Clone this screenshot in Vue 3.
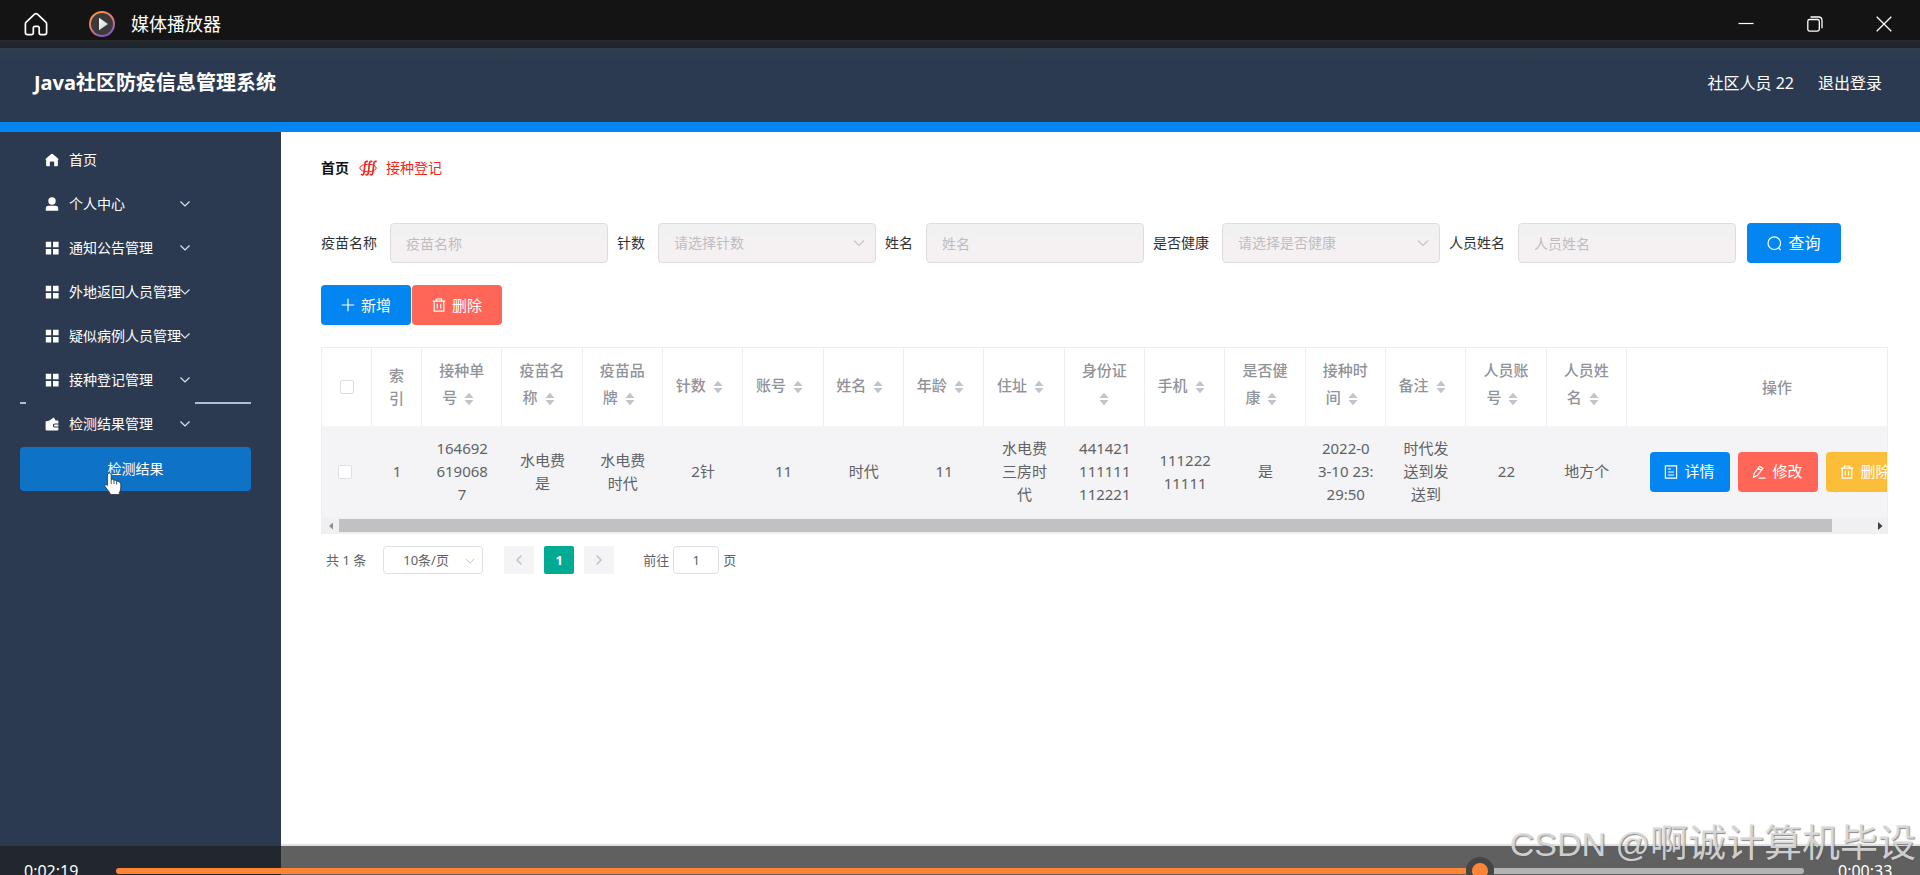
<script setup>
import { ref } from 'vue'

const menu = [
  { label: '首页', icon: 'home', arrow: false },
  { label: '个人中心', icon: 'user', arrow: true },
  { label: '通知公告管理', icon: 'grid', arrow: true },
  { label: '外地返回人员管理', icon: 'grid', arrow: true },
  { label: '疑似病例人员管理', icon: 'grid', arrow: true },
  { label: '接种登记管理', icon: 'grid', arrow: true },
  { label: '检测结果管理', icon: 'wallet', arrow: true, marked: true }
]

const filters = [
  { id: 'vaccine', label: '疫苗名称', placeholder: '疫苗名称', type: 'text' },
  { id: 'dose', label: '针数', placeholder: '请选择针数', type: 'select' },
  { id: 'name', label: '姓名', placeholder: '姓名', type: 'text' },
  { id: 'healthy', label: '是否健康', placeholder: '请选择是否健康', type: 'select' },
  { id: 'person', label: '人员姓名', placeholder: '人员姓名', type: 'text' }
]

const columns = [
  { title: ['接种单', '号'], cell: ['164692', '619068', '7'] },
  { title: ['疫苗名', '称'], cell: ['水电费', '是'] },
  { title: ['疫苗品', '牌'], cell: ['水电费', '时代'] },
  { title: ['针数'], cell: ['2针'] },
  { title: ['账号'], cell: ['11'] },
  { title: ['姓名'], cell: ['时代'] },
  { title: ['年龄'], cell: ['11'] },
  { title: ['住址'], cell: ['水电费', '三房时', '代'] },
  { title: ['身份证', ''], cell: ['441421', '111111', '112221'] },
  { title: ['手机'], cell: ['111222', '11111'] },
  { title: ['是否健', '康'], cell: ['是'] },
  { title: ['接种时', '间'], cell: ['2022-0', '3-10 23:', '29:50'] },
  { title: ['备注'], cell: ['时代发', '送到发', '送到'] },
  { title: ['人员账', '号'], cell: ['22'] },
  { title: ['人员姓', '名'], cell: ['地方个'] }
]

const jump = ref('1')
</script>

<template>
  <div class="window">
    <header class="titlebar">
      <button class="bare home" type="button" aria-label="主页">
        <svg width="24" height="24" viewBox="0 0 24 24" fill="none" stroke="#fff" stroke-width="1.7" stroke-linejoin="round">
          <path d="M2.2 10.2 L10.6 2.2 Q12 1 13.4 2.2 L21.8 10.2 Q22.6 11 22.6 12 V20.5 Q22.6 22.6 20.6 22.6 H17 Q15.2 22.6 15.2 20.8 V16 Q15.2 14.3 13.6 14.3 H10.9 Q9.3 14.3 9.3 16 V20.8 Q9.3 22.6 7.5 22.6 H3.5 Q1.4 22.6 1.4 20.5 V12 Q1.4 11 2.2 10.2 Z" />
        </svg>
      </button>
      <svg class="logo" width="26" height="26" viewBox="0 0 26 26">
        <defs>
          <linearGradient id="ring" x1="0.2" y1="0" x2="0.7" y2="1">
            <stop offset="0" stop-color="#ff9440" />
            <stop offset="0.5" stop-color="#d87a7c" />
            <stop offset="1" stop-color="#8a52c8" />
          </linearGradient>
          <linearGradient id="tri" x1="0" y1="0" x2="1" y2="1">
            <stop offset="0" stop-color="#fff" />
            <stop offset="1" stop-color="#c8c8c8" />
          </linearGradient>
        </defs>
        <circle cx="13" cy="13" r="12" fill="#3a3a3a" stroke="url(#ring)" stroke-width="2" />
        <path d="M10 6.8 L19 13 L10 19.2 Z" fill="url(#tri)" />
      </svg>
      <span class="app-name">媒体播放器</span>
      <div class="controls">
        <button class="bare" type="button" aria-label="最小化">
          <svg width="16" height="16" viewBox="0 0 16 16"><path d="M0.5 7.5 H15.5" stroke="#fff" stroke-width="1.2" /></svg>
        </button>
        <button class="bare" type="button" aria-label="还原">
          <svg width="16" height="16" viewBox="0 0 16 16" fill="none" stroke="#fff" stroke-width="1.3">
            <rect x="0.8" y="3.5" width="11.5" height="11.6" rx="1.8" />
            <path d="M3.5 1 H11.5 Q15 1 15 4.5 V12.3" />
          </svg>
        </button>
        <button class="bare" type="button" aria-label="关闭">
          <svg width="16" height="16" viewBox="0 0 16 16"><path d="M0.7 0.7 L15.3 15.3 M15.3 0.7 L0.7 15.3" stroke="#fff" stroke-width="1.3" /></svg>
        </button>
      </div>
    </header>

    <div class="banner">
      <h1>Java社区防疫信息管理系统</h1>
      <span class="who">社区人员 22</span>
      <a href="#" class="logout">退出登录</a>
    </div>

    <div class="body">
      <nav class="sidebar">
        <ul>
          <li v-for="m in menu" :key="m.label" :class="{ marked: m.marked }">
            <a href="#">
              <svg class="mi" width="14" height="14" viewBox="0 0 14 14" fill="#fff">
                <path v-if="m.icon === 'home'" d="M7 0.8 Q7.5 0.8 8 1.2 L13 5.6 Q13.6 6.2 13.4 7 H12.9 V12 Q12.9 13.2 11.7 13.2 H9.2 V9.6 Q9.2 8.6 8.2 8.6 H5.8 Q4.8 8.6 4.8 9.6 V13.2 H2.3 Q1.1 13.2 1.1 12 V7 H0.6 Q0.4 6.2 1 5.6 L6 1.2 Q6.5 0.8 7 0.8 Z" />
                <template v-else-if="m.icon === 'user'">
                  <circle cx="7" cy="4" r="3.7" />
                  <path d="M0.8 13.8 V11.6 Q0.8 8.8 3.6 8.8 H10.4 Q13.2 8.8 13.2 11.6 V13.8 Z" />
                </template>
                <path v-else-if="m.icon === 'grid'" d="M0.8 0.8 H6.2 V6.2 H0.8 Z M8 0.8 H13.6 V6.2 H8 Z M0.8 8 H6.2 V13.4 H0.8 Z M8 8 H13.6 V13.4 H8 Z" />
                <path v-else d="M0.6 4.4 L4.4 3.6 L8.8 0.6 L10.6 3.4 H12.4 Q13.4 3.4 13.4 4.6 V6.4 H9.8 A2 2 0 0 0 9.8 10.4 H13.4 V12.2 Q13.4 13.4 12.2 13.4 H1.8 Q0.6 13.4 0.6 12.2 Z M9.9 7.6 H13.4 V9.4 H9.9 A0.9 0.9 0 0 1 9.9 7.6 Z" />
              </svg>
              <span>{{ m.label }}</span>
            </a>
            <svg v-if="m.arrow" class="chev" width="12" height="12" viewBox="0 0 12 12" fill="none" stroke="#dfe5ec" stroke-width="1.2">
              <path d="M1.5 3.5 L6 8 L10.5 3.5" />
            </svg>
          </li>
        </ul>
        <div class="sub">
          <a href="#">检测结果</a>
          <svg class="hand" width="18" height="24" viewBox="0 0 18 24">
            <path d="M5.2 1 Q7.2 1 7.2 3 V7.4 Q9 6.6 9.8 8.2 Q11.6 7.6 12.4 9.2 Q14.2 8.6 15 10 Q16.8 9.8 16.8 12 V16 Q16.8 18.4 15.4 20.4 V22.6 H6.6 Q5.6 20.2 4 18.4 L1 14.6 Q0.4 13 1.6 12.6 Q2.4 12.4 3.4 13.6 V3 Q3.4 1 5.2 1 Z" fill="#fff" stroke="#1b2a3c" stroke-width="0.8" />
            <path d="M7.2 7.4 V12 M10 8.4 V12 M12.6 9.4 V12.4" stroke="#1b2a3c" stroke-width="0.8" fill="none" />
          </svg>
        </div>
      </nav>

      <main>
        <div class="crumbs">
          <a href="#">首页</a>
          <svg class="sep" width="18" height="16" viewBox="0 0 18 16" fill="none" stroke="#f2281e">
            <path stroke-width="1.7" stroke-linecap="round" d="M2.6 14.6 Q4.6 15.6 5 12.6 L6 3.6 Q6.4 0.8 8.2 1.4 M7 14.6 Q9 15.6 9.4 12.6 L10.4 3.6 Q10.8 0.8 12.6 1.4 M11.4 14.6 Q13.4 15.6 13.8 12.6 L14.8 3.6 Q15.2 0.8 17 1.4" />
            <ellipse cx="9" cy="8" rx="8.2" ry="3.8" stroke-width="1" />
          </svg>
          <span class="here">接种登记</span>
        </div>

        <form class="filters" @submit.prevent>
          <div v-for="f in filters" :key="f.id" class="field">
            <label :for="f.id">{{ f.label }}</label>
            <input v-if="f.type === 'text'" :id="f.id" type="text" :placeholder="f.placeholder" />
            <div v-else class="pick">
              <select :id="f.id">
                <option value="">{{ f.placeholder }}</option>
              </select>
              <svg width="12" height="12" viewBox="0 0 12 12" fill="none" stroke="#c0c4cc" stroke-width="1.1"><path d="M1 3.5 L6 8.5 L11 3.5" /></svg>
            </div>
          </div>
          <button class="btn search" type="submit">
            <svg width="15" height="15" viewBox="0 0 15 15" fill="none" stroke="#fff" stroke-width="1.2"><circle cx="7.3" cy="7.2" r="6.3" /><path d="M11.2 11.4 L13.6 14.2" /></svg>
            查询
          </button>
        </form>

        <div class="tools">
          <button class="btn blue" type="button">
            <svg width="14" height="14" viewBox="0 0 14 14" stroke="#fff" stroke-width="1.2"><path d="M7 0.8 V13.2 M0.8 7 H13.2" /></svg>
            新增
          </button>
          <button class="btn red" type="button">
            <svg width="14" height="14" viewBox="0 0 14 14" fill="none" stroke="#fff" stroke-width="1.2"><path d="M0.8 3.2 H13.2 M4.4 3 V1 H9.6 V3 M2.2 3.2 V13.2 H11.8 V3.2 M5.3 5.8 V10.6 M8.7 5.8 V10.6" /></svg>
            删除
          </button>
        </div>

        <div class="table-wrap">
          <table>
            <colgroup>
              <col class="c-fixed" />
              <col class="c-fixed" />
              <col v-for="(c, i) in columns" :key="i" />
              <col class="c-ops" />
            </colgroup>
            <thead>
              <tr>
                <th><input type="checkbox" aria-label="全选" /></th>
                <th>索<br />引</th>
                <th v-for="(c, i) in columns" :key="i">
                  <template v-for="(t, k) in c.title" :key="k"><br v-if="k" />{{ t }}</template><span class="caret"><svg width="10" height="14" viewBox="0 0 10 14" fill="#c0c4cc"><path d="M5 0.8 L9.6 6 H0.4 Z M0.4 8 H9.6 L5 13.2 Z" /></svg></span>
                </th>
                <th>操作</th>
              </tr>
            </thead>
            <tbody>
              <tr>
                <td class="tick"><input type="checkbox" aria-label="选择第1行" /></td>
                <td>1</td>
                <td v-for="(c, i) in columns" :key="i">
                  <template v-for="(t, k) in c.cell" :key="k"><br v-if="k" />{{ t }}</template>
                </td>
                <td class="ops-cell">
                  <div class="ops">
                    <button class="btn blue" type="button">
                      <svg width="14" height="14" viewBox="0 0 14 14" fill="none" stroke="#fff" stroke-width="1.2"><path d="M1.4 0.8 H12.6 V13.2 H1.4 Z M4 4 H7 M4 7 H10 M4 10 H10" /></svg>
                      详情
                    </button>
                    <button class="btn red" type="button">
                      <svg width="14" height="14" viewBox="0 0 14 14" fill="none" stroke="#fff" stroke-width="1.2"><path d="M1.6 12.2 L2.2 8.4 L7.6 1.2 L10.8 3.4 L5.4 10.6 Z M6.2 3.2 L9.2 5.4 M6.6 13.2 H13.4" /></svg>
                      修改
                    </button>
                    <button class="btn amber" type="button">
                      <svg width="14" height="14" viewBox="0 0 14 14" fill="none" stroke="#fff" stroke-width="1.2"><path d="M0.8 3.2 H13.2 M4.4 3 V1 H9.6 V3 M2.2 3.2 V13.2 H11.8 V3.2 M5.3 5.8 V10.6 M8.7 5.8 V10.6" /></svg>
                      删除
                    </button>
                  </div>
                </td>
              </tr>
            </tbody>
          </table>
          <div class="scroll">
            <svg width="17" height="8" viewBox="0 0 17 8"><path d="M11 0.5 V7.5 L7 4 Z" fill="#8f8f8f" /></svg>
            <div class="thumb"></div>
            <svg width="17" height="8" viewBox="0 0 17 8"><path d="M8 0 V8 L12.5 4 Z" fill="#404040" /></svg>
          </div>
        </div>

        <div class="pager">
          <span class="total">共 1 条</span>
          <div class="pick size">
            <select aria-label="每页条数"><option>10条/页</option></select>
            <svg width="10" height="10" viewBox="0 0 12 12" fill="none" stroke="#c0c4cc" stroke-width="1.2"><path d="M1 3.5 L6 8.5 L11 3.5" /></svg>
          </div>
          <button type="button" class="pg" aria-label="上一页"><svg width="8" height="12" viewBox="0 0 8 12" fill="none" stroke="#c0c4cc" stroke-width="1.6"><path d="M6.5 1.5 L2 6 L6.5 10.5" /></svg></button>
          <button type="button" class="pg on">1</button>
          <button type="button" class="pg" aria-label="下一页"><svg width="8" height="12" viewBox="0 0 8 12" fill="none" stroke="#c0c4cc" stroke-width="1.6"><path d="M1.5 1.5 L6 6 L1.5 10.5" /></svg></button>
          <label class="goto">前往 <input v-model="jump" type="text" /> 页</label>
        </div>
      </main>
    </div>

    <footer class="player">
      <span class="time">0:02:19</span>
      <div class="bar">
        <div class="played"></div>
        <div class="knob"></div>
        <div class="rest"></div>
      </div>
      <span class="time end">0:00:33</span>
    </footer>
    <div class="mark">CSDN @<span>啊诚计算机毕设</span></div>
  </div>
</template>

<style>
body {
  margin: 0;
}
</style>

<style scoped>
.window {
  position: relative;
  display: flex;
  flex-direction: column;
  height: 100vh;
  overflow: hidden;
  background: #fff;
  color: #606266;
  font: 14px/20px "Noto Sans", "Noto Sans CJK SC", sans-serif;
}
* {
  box-sizing: border-box;
}
svg {
  flex: none;
}
a {
  color: inherit;
  text-decoration: none;
}
button,
input,
select {
  margin: 0;
  font: inherit;
  color: inherit;
}
.bare {
  display: flex;
  padding: 0;
  border: 0;
  background: none;
}

.titlebar {
  display: flex;
  align-items: center;
  flex: none;
  height: 48px;
  padding: 0 28px 0 24px;
  background: linear-gradient(#141414 40px, #2a2a2c 40px, #2a2a2c 41px, #20262d 42px);
}
.logo {
  margin-left: 41px;
}
.app-name {
  margin-left: 16px;
  color: #fff;
  font-size: 18px;
}
.controls {
  display: flex;
  gap: 53px;
  margin-left: auto;
}

.banner {
  display: flex;
  align-items: center;
  flex: none;
  height: 84px;
  padding: 0 38px 4px 34px;
  border-bottom: 10px solid #0386f2;
  background: linear-gradient(#303d4c, #2b3a50 14px);
  color: #fff;
  font-size: 16px;
}
h1 {
  flex: 1;
  margin: 0;
  font-size: 20px;
  line-height: 26px;
}
.who {
  margin-right: 24px;
}

.body {
  display: flex;
  flex: 1;
  min-height: 0;
}
.sidebar {
  flex: none;
  width: 281px;
  padding: 6px 30px 0 20px;
  background: #2b3a50;
  color: #fff;
}
ul {
  margin: 0;
  padding: 0;
  list-style: none;
}
li {
  position: relative;
  height: 44px;
}
li a {
  display: flex;
  align-items: center;
  gap: 10px;
  height: 100%;
  padding-left: 25px;
}
.chev {
  position: absolute;
  left: 159px;
  top: 16px;
}
.marked::before,
.marked::after {
  content: "";
  position: absolute;
  top: 0;
  height: 2px;
  background: #adbdd2;
}
.marked::before {
  left: 0;
  width: 6px;
}
.marked::after {
  right: 0;
  width: 56px;
}
.sub {
  position: relative;
  margin-top: 1px;
  border-radius: 4px;
  background: #0e72c6;
}
.sub a {
  display: block;
  line-height: 44px;
  text-align: center;
}
.hand {
  position: absolute;
  left: 84px;
  top: 25px;
}

main {
  flex: 1;
  min-width: 0;
  padding: 26px 32px 0 40px;
}
.crumbs {
  display: flex;
  align-items: center;
  height: 20px;
  color: #f2281e;
}
.crumbs a {
  color: #111;
  font-weight: 700;
}
.sep {
  margin: 0 9px 0 10px;
}
.filters {
  display: flex;
  gap: 9px;
  margin-top: 45px;
}
.field {
  display: flex;
  align-items: center;
  gap: 13px;
  color: #303133;
}
.field > input,
.pick select {
  width: 218px;
  height: 40px;
  padding: 0 15px;
  border: 1px solid #dedce0;
  border-radius: 4px;
  background: linear-gradient(#f2f1f2 10px, #f5f1f3 14px);
  outline: 0;
}
::placeholder {
  color: #bfbcc1;
  opacity: 1;
}
.pick {
  position: relative;
  display: flex;
}
.pick select {
  appearance: none;
  color: #bfbcc1;
}
.pick svg {
  position: absolute;
  right: 11px;
  top: 14px;
}
.btn {
  display: flex;
  align-items: center;
  justify-content: center;
  gap: 6px;
  width: 90px;
  height: 40px;
  padding: 0;
  border: 0;
  border-radius: 4px;
  color: #fff;
  font-size: 15px;
}
.search {
  width: 94px;
  margin-left: 2px;
  background: #0386f2;
  font-size: 16px;
}
.blue {
  background: #0386f2;
}
.red {
  background: #ff6658;
}
.amber {
  background: #fcbe38;
}
.tools {
  display: flex;
  gap: 1px;
  margin-top: 22px;
}

.table-wrap {
  margin-top: 22px;
  overflow: hidden;
  border: 1px solid #edeef3;
  border-width: 1px 1px 0;
}
table {
  min-width: 1606px;
  width: 100%;
  table-layout: fixed;
  border-collapse: separate;
  border-spacing: 0;
  font-size: 15px;
  line-height: 23px;
  text-align: center;
}
.c-fixed {
  width: 50px;
}
.c-ops {
  width: 301px;
}
th {
  height: 78px;
  padding: 10px 0;
  border-right: 1px solid #edeef3;
  color: #909399;
  font-weight: 500;
}
td {
  height: 91px;
  padding: 11px 0;
  background: #f4f4f6;
}
th input,
td input {
  display: block;
  width: 14px;
  height: 14px;
  margin: 0 auto;
  appearance: none;
  border: 1px solid #dcdfe6;
  border-radius: 2px;
  background: #fff;
}
.tick {
  padding-right: 4px;
}
.caret {
  display: inline-flex;
  align-items: center;
  justify-content: center;
  width: 24px;
  height: 34px;
  vertical-align: middle;
}
.ops {
  display: flex;
  justify-content: center;
  gap: 8px;
}
.ops .btn {
  width: 80px;
}
.scroll {
  display: flex;
  align-items: center;
  height: 17px;
  background: #f0f0f2;
}
.thumb {
  flex: 1;
  height: 13px;
  margin-right: 38px;
  background: #c1c1c3;
}

.pager {
  display: flex;
  align-items: center;
  margin-top: 12px;
  padding-left: 5px;
  font-size: 13px;
}
.size {
  margin: 0 21px 0 17px;
}
.size select {
  width: 100px;
  height: 28px;
  padding: 0 19px;
  border-color: #dcdfe6;
  background: #fff;
  color: #606266;
}
.size svg {
  right: 8px;
  top: 10px;
}
.pg {
  display: flex;
  align-items: center;
  justify-content: center;
  width: 30px;
  height: 28px;
  margin-right: 10px;
  padding: 0;
  border: 0;
  border-radius: 2px;
  background: #f4f4f6;
}
.on {
  background: #00ab94;
  color: #fff;
  font-weight: 700;
}
.goto {
  display: flex;
  align-items: center;
  gap: 4px;
  margin-left: 19px;
}
.goto input {
  width: 46px;
  height: 28px;
  padding: 0;
  border: 1px solid #dcdfe6;
  border-radius: 4px;
  text-align: center;
}

.player {
  position: absolute;
  left: 0;
  right: 0;
  bottom: 0;
  display: flex;
  height: 31px;
  padding: 23px 24px 0;
  overflow: hidden;
  border-top: 2px solid rgba(40, 45, 55, 0.14);
  background: rgba(31, 31, 31, 0.71);
  background-clip: padding-box;
  color: #fff;
  font-size: 16px;
}
.time {
  width: 92px;
  margin-top: -10px;
  line-height: 24px;
}
.end {
  width: 58px;
}
.bar {
  display: flex;
  flex: 1;
  align-items: center;
  height: 6px;
  margin: -1px 34px 0 0;
}
.played {
  width: 80%;
  height: 6px;
  border-radius: 3px 0 0 3px;
  background: #ff8534;
}
.knob {
  flex: none;
  width: 28px;
  height: 28px;
  border: 6px solid #454545;
  border-radius: 50%;
  background: #ff8534;
}
.rest {
  flex: 1;
  height: 6px;
  border-radius: 0 3px 3px 0;
  background: #b4b4b4;
}
.mark {
  position: absolute;
  right: 4px;
  bottom: 3px;
  color: rgba(222, 222, 222, 0.9);
  font: 34px/56px "Liberation Sans", "Noto Sans CJK SC", sans-serif;
  text-shadow: 1px 1px 1px rgba(90, 90, 90, 0.7);
  white-space: nowrap;
}
.mark span {
  font-size: 38px;
}
</style>
